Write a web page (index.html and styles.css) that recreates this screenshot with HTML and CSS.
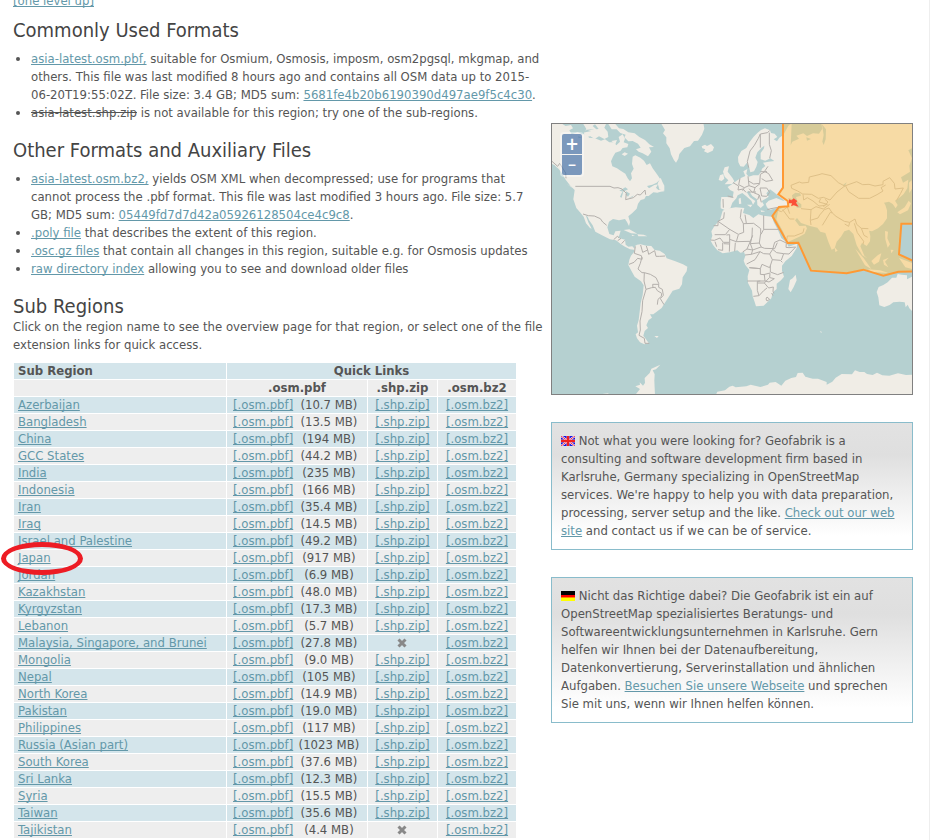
FILE: index.html
```
<!DOCTYPE html>
<html lang="en">
<head>
    <meta charset="UTF-8">
    <meta name="viewport" content="width=device-width, initial-scale=1.0">
    <title>Geofabrik Download Server</title>
    <link rel="stylesheet" href="styles.css">
</head>
<body>

    <div class="page">
        <main class="content">
            <p class="up"><a href="#">[one level up]</a></p>

            <h2>Commonly Used Formats</h2>
            <ul>
                <li><a href="#">asia-latest.osm.pbf,</a> suitable for Osmium, Osmosis, imposm, osm2pgsql, mkgmap, and<br>others. This file was last modified 8 hours ago and contains all OSM data up to 2015-<br>06-20T19:55:02Z. File size: 3.4 GB; MD5 sum: <a href="#">5681fe4b20b6190390d497ae9f5c4c30</a>.</li>
                <li><s>asia-latest.shp.zip</s> is not available for this region; try one of the sub-regions.</li>
            </ul>

            <h2>Other Formats and Auxiliary Files</h2>
            <ul>
                <li><a href="#">asia-latest.osm.bz2,</a> yields OSM XML when decompressed; use for programs that<br>cannot process the .pbf format. This file was last modified 3 hours ago. File size: 5.7<br>GB; MD5 sum: <a href="#">05449fd7d7d42a05926128504ce4c9c8</a>.</li>
                <li><a href="#">.poly file</a> that describes the extent of this region.</li>
                <li><a href="#">.osc.gz files</a> that contain all changes in this region, suitable e.g. for Osmosis updates</li>
                <li><a href="#">raw directory index</a> allowing you to see and download older files</li>
            </ul>

            <h2 class="tight">Sub Regions</h2>
            <p>Click on the region name to see the overview page for that region, or select one of the file<br>extension links for quick access.</p>

            <table class="regions">
                <colgroup>
                    <col class="name-col">
                    <col class="pbf-col">
                    <col class="shp-col">
                    <col class="bz2-col">
                </colgroup>
                <thead>
                    <tr><th class="name">Sub Region</th><th colspan="3">Quick Links</th></tr>
                    <tr><th></th><th>.osm.pbf</th><th>.shp.zip</th><th>.osm.bz2</th></tr>
                </thead>
                <tbody id="rows"></tbody>
            </table>
        </main>

        <aside class="sidebar">
            <div class="map">
                <svg viewBox="0 0 1080 810" role="img" aria-label="Map of Asia">
                    <!-- North America -->
                    <g transform="translate(-21 -27)">
                        <path class="land" d="M15 20L52 27 62 33 78 30 84 40 73 46 80 58 98 52 112 58 126 57 132 68 150 70 168 77 180 73 193 82 207 82 214 91 225 80 221 66 233 58 240 71 236 82 250 87 247 97 233 99 226 108 211 113 204 125 198 139 202 154 216 160 227 167 241 176 248 190 255 199 261 190 258 175 266 161 261 147 263 125 271 121 286 128 297 137 305 150 315 145 323 160 337 179 346 193 335 203 322 209 306 213 312 220 328 210 339 208 333 218 340 225 352 222 358 229 347 230 337 233 325 232 311 243 303 243 298 252 287 255 279 266 275 281 262 294 250 304 255 321 252 333 246 321 240 312 222 316 204 312 192 320 187 337 193 357 206 361 211 349 227 347 223 361 219 368 232 372 240 374 242 389 250 395 262 394 272 405 255 403 240 395 227 387 213 376 195 373 174 362 151 350 143 331 132 315 128 305 122 300 130 322 140 341 135 339 123 325 116 305 105 292 94 279 85 253 89 225 76 212 61 193 52 177 42 163 28 150 15 145Z"/>
                        <path class="land" d="M115 27L183 27 178 38 188 50 190 66 178 72 162 64 149 72 136 64 123 66 116 53 124 42ZM190 27L211 27 222 40 235 42 250 52 269 55 283 66 300 75 313 88 327 96 312 97 319 110 309 124 293 115 281 110 273 103 287 98 279 86 263 78 250 79 238 67 242 59 226 54 215 43 200 43ZM347 23L360 45 354 55 364 67 364 85 374 100 378 118 387 136 393 143 400 131 403 117 418 99 435 94 447 78 459 77 471 59 478 41 475 23Z"/>
                        <path class="land" d="M470 94L480 89 486 93 498 87 507 97 503 107 488 114 477 109 481 103 472 100ZM338 205L347 188 352 200 358 212 358 227 343 223ZM236 345L253 343 277 356 258 355ZM277 358L296 359 307 364 280 364ZM260 359L270 361 261 363ZM65 206L86 220 78 216ZM199 78L216 75 211 88ZM239 112L249 116 239 123 230 118Z"/>
                        <path class="lake" d="M223 227L241 217 249 223 235 230ZM230 234L235 229 230 248 225 246ZM243 229L255 236 249 245 242 239ZM241 253L261 247 268 241 250 250ZM119 45L148 42 128 47ZM99 64L111 67 101 70ZM105 45L139 48 114 53ZM150 28L161 42 154 43 143 33Z"/>
                        <path class="border" d="M20 138L38 154 44 145 62 174 63 190M91 214L195 214 207 219 219 218 231 222 244 235 242 254 265 248 277 238 286 240 300 225 302 239M114 297L130 302 148 303 166 311 173 321 185 331M206 374L217 364 222 368M218 377L228 370M230 386L239 376"/>
                    </g>
                    <!-- South America, Antarctic peninsula -->
                    <g transform="translate(-21 393)">
                        <path class="land" d="M270 -27L276 -31 287 -32 304 -28 319 -27 329 -15 344 -13 359 -3 365 10 389 18 414 28 427 35 425 49 413 67 411 88 403 101 383 107 373 123 357 148 350 159 335 170 325 178 315 178 321 188 311 195 304 211 309 219 299 228 295 242 303 253 311 264 298 268 285 262 276 250 272 238 279 232 276 212 281 195 284 170 287 145 293 120 296 91 288 79 269 65 259 47 250 30 253 14 258 2 267 -9Z"/>
                        <path class="land" d="M269 422L285 402 271 394 285 389 284 382 294 392 300 384 299 369 314 354 319 341 346 329 333 343 323 346 329 358 328 377 330 422ZM328 243L341 243 336 249ZM418 261L425 265ZM172 417L190 415 190 419Z"/>
                        <path class="border" d="M252 28L267 22 278 10 291 13M271 -26L268 -5 289 2 292 13M287 -30L293 -8 308 -15 311 -2 329 -13M308 -15L304 -27M329 -13L333 4 344 4 360 3M291 6L286 25 279 42 291 53 298 53 297 78 303 103 320 98 331 97 337 107 350 115 349 124 339 133 337 149M298 53L316 58 333 68 341 85 341 97M324 98L323 88 340 88M341 97L352 103 355 121 346 131 357 149M303 103L293 137 291 170 285 198 286 225 282 241 298 250 300 265 313 265"/>
                    </g>
                    <!-- Europe and Asia -->
                    <g transform="translate(549 -27)">
                        <path class="land" d="M145 60L133 68 126 79 116 73 127 66 119 56 108 54 105 46 90 40 78 45 67 54 56 65 44 81 34 99 19 108 9 126 10 142 16 154 26 155 36 143 42 156 46 172 57 169 64 155 68 141 61 128 67 112 80 98 88 92 87 100 77 114 77 133 91 137 106 130 118 138 101 140 84 143 91 153 81 161 78 171 70 181 55 181 41 185 34 176 37 162 25 169 31 183 16 190 5 197 -9 208 -22 216 -15 225 -4 230 -7 248 -24 246 -41 246 -43 262 -43 280 -29 286 -14 280 -8 263 4 250 8 241 22 234 34 244 49 257 54 269 61 258 45 247 35 231 42 228 52 243 66 253 67 270 77 279 87 270 80 258 92 251 101 245 94 235 105 223 117 232 128 241 148 256 160 250 170 25 160 32Z"/>
                        <path class="land" d="M92 266L101 257 124 249 144 257 163 256 170 275 135 278 122 280 105 285 96 277ZM-31 157L-18 154 -22 170 -8 188 -2 199 -9 207 -31 208 -20 196 -31 185 -36 170ZM-45 181L-35 177 -32 191 -40 198 -49 195ZM36 269L52 269 47 277ZM11 251L17 248 19 266 12 267ZM77 286L91 289 79 291Z"/>
                        <path class="land" d="M140 84L167 91 172 80 192 71 184 62 205 55 216 63 234 55 252 56 262 41 258 20 545 20 545 91 520 106 531 130 523 152 525 170 513 178 498 187 504 203 520 194 517 220 506 237 496 246 480 257 488 270 482 280 473 267 462 260 447 263 451 270 456 286 456 310 444 327 429 340 411 349 402 347 406 363 405 379 395 393 381 384 376 394 388 422 397 430 382 421 365 391 355 357 342 344 328 349 318 365 305 380 299 400 290 404 280 380 271 354 256 350 247 338 225 333 198 324 186 309 180 316 193 333 212 332 216 340 209 356 193 365 157 382 145 351 124 313 130 285 151 274 147 248 130 239 144 220Z"/>
                        <path class="land" d="M522 203L530 196 532 220 523 234ZM487 292L509 277 521 257 528 265 519 286 495 298ZM450 348L459 350 457 370 465 388 458 398 451 373ZM467 404L476 405 469 415ZM361 402L385 428 409 462 390 451ZM409 438L429 420 439 415 432 440 417 449ZM399 463L435 466 461 474 411 471ZM444 435L461 428 450 440 460 457 447 449ZM492 429L540 447 540 464 511 457ZM299 397L308 407 301 411Z"/>
                        <path class="lake" d="M171 241L181 233 195 235 198 242 183 246 188 260 199 268 199 278 186 278 175 263ZM261 28L273 43 272 73 266 90 262 80 266 60ZM214 67L228 72 216 77ZM324 210L335 202 328 217Z"/>
                        <path class="border" d="M41 158L37 140 45 108 58 91 70 70 76 57 97 53 104 47M76 57L76 98M103 53L103 88 109 107 104 130M-6 203L11 213 9 225 24 222 33 232M15 190L11 209 28 218 42 212 39 184M39 197L56 207 74 205 76 178 90 170 101 176 113 196 93 199 80 191M28 218L23 227M42 212L60 218 75 206M60 218L56 233 73 240 68 254M53 233L42 221M75 219L80 243 95 244 104 232 95 219 75 219M73 240L79 262M88 170L99 154M76 170L96 170M-22 243L-5 247M-36 252L-35 278M40 231L63 231M97 284L108 281 134 276 159 274"/>
                        <path class="border asia" d="M170 220L168 211 193 201 201 204 221 202 223 186 252 179 261 176 288 182 310 203 329 213 365 200 383 209 402 208 420 213 444 209 444 199 464 188 478 205 480 222 505 219 497 235 485 256M170 220L188 228 203 237 230 238 250 250 265 247 285 255 306 231 329 213M332 213L341 230 371 250 404 250 426 239 444 228 438 218 452 210M204 238L206 255 217 248 234 258 252 273 264 272 277 268 252 261 257 251M198 281L228 284 243 275 265 282 284 268M228 284L226 316 228 330M226 316L249 309 254 300 268 284 282 279 292 294 286 292 262 331M292 294L303 304 328 319 344 322 341 334 329 327M344 322L360 312 365 328 379 340 400 341M358 325L367 353 386 379 384 388M379 340L387 361 398 367M143 284L164 312 178 312M126 285L139 290 157 276 164 296M155 377L157 363 178 363 204 353 207 340M160 251L177 255M270 253L279 261 265 276"/>
                    </g>
                    <!-- Africa -->
                    <g transform="translate(414 168)">
                        <path class="land" d="M98 92L110 86 137 82 163 84 159 99 178 105 190 114 205 103 220 107 246 110 251 126 264 150 274 174 289 187 296 200 321 191 320 204 305 228 286 244 276 257 276 272 282 290 273 301 260 311 260 327 249 336 244 355 221 377 198 379 194 366 188 349 186 332 174 309 173 289 178 270 166 255 161 242 166 227 162 216 151 218 142 211 119 217 98 220 82 211 69 195 62 182 67 167 64 154 74 137 90 119ZM317 284L320 301 311 321 302 337 295 327 300 300 308 295Z"/>
                        <path class="border" d="M103 97L101 115 84 124M84 124L84 137 71 137M84 124L119 148 106 164 74 164M119 148L145 163 161 157 160 131 151 113 154 88M160 131L191 130 212 146 212 160 208 189 181 191 186 169 187 143M169 130L165 104M221 106L221 148 269 148M221 148L213 163M109 165L119 164 119 187 100 187 90 174 73 181 62 180M119 178L139 185 145 164M119 187L118 215M136 188L134 214M139 185L181 184 188 166M181 184L171 207 158 216M181 191L188 210 213 201 224 205 254 206 262 188M208 189L214 201M171 207L188 210 184 223 165 225M184 223L210 215 221 221 239 222 247 239 239 263 216 253 211 266 178 263M210 215L195 239 170 252M239 222L248 208 254 187 270 180 289 189 288 202 297 203 317 201 297 222 281 221 260 218 248 208M247 239L271 241 277 247M281 221L274 240M241 257L241 276 263 284 281 277M178 263L211 266 211 283 223 284 225 303 172 303M211 303L202 304 202 331 207 347 190 349M203 309L223 309 239 292 240 280M223 309L236 324 250 321 249 334 252 340M207 347L221 332 231 324M225 303L237 306 253 296 240 293M221 284L240 279M98 188L98 211 84 209M75 185L80 200M101 191L118 192M231 351L239 358 231 363 228 357ZM245 339L249 347"/>
                    </g>
                    <!-- Australia, Antarctica -->
                    <path class="land" transform="translate(549 393)" d="M545 77L532 65 516 73 516 61 500 59 488 57 484 68 471 68 458 82 445 90 431 96 425 111 430 127 433 151 448 156 464 150 475 142 494 140 509 142 512 157 518 149 523 160 532 169 545 170ZM-60 425L-53 410 -30 406 -17 395 -7 392 2 397 34 394 47 389 76 396 99 389 104 383 122 381 139 392 151 377 169 369 183 366 188 354 203 353 211 365 233 371 249 371 275 381 275 389 292 380 302 368 320 357 351 358 360 346 374 351 388 351 396 357 413 360 426 353 442 361 463 362 489 355 513 360 540 359 540 425ZM254 229L260 230 259 234Z"/>
                    <!-- Extent of the extract -->
                    <g transform="translate(549 -27)">
                        <path class="extent" fill-rule="evenodd" d="M144 10V218L130 238 158 258 160 274 132 276 112 303 158 384 190 383 228 467 335 475 385 464 445 482 490 470 545 469V443L492 418 499 326H545V10Z"/>
                        <path class="hot" d="M162 253L170 256 176 250 187 258 183 263 191 275 176 271 168 274 171 265 161 265Z"/>
                    </g>
                </svg>
                <div class="zoom">
                    <button type="button" aria-label="Zoom in">+</button>
                    <button type="button" aria-label="Zoom out">−</button>
                </div>
            </div>

            <div class="note">
                <svg class="flag" viewBox="0 0 14 10" aria-hidden="true">
                    <rect width="14" height="10" fill="#1414e0"/>
                    <path d="M0 0L14 10M14 0L0 10" stroke="#fff" stroke-width="2"/>
                    <path d="M0 0L14 10M14 0L0 10" stroke="#f03050" stroke-width="1"/>
                    <path d="M7 0V10M0 5H14" stroke="#f99" stroke-width="3"/>
                    <path d="M7 0V10M0 5H14" stroke="#f02020" stroke-width="2"/>
                </svg>
                Not what you were looking for? Geofabrik is a<br>consulting and software development firm based in<br>Karlsruhe, Germany specializing in OpenStreetMap<br>services. We're happy to help you with data preparation,<br>processing, server setup and the like. <a href="#">Check out our web<br>site</a> and contact us if we can be of service.
            </div>

            <div class="note">
                <svg class="flag" viewBox="0 0 14 10" aria-hidden="true">
                    <rect width="14" height="4" fill="#000"/>
                    <rect y="4" width="14" height="3" fill="#f00"/>
                    <rect y="6" width="14" height="1" fill="#f80"/>
                    <rect y="7" width="14" height="3" fill="#ff0"/>
                </svg>
                Nicht das Richtige dabei? Die Geofabrik ist ein auf<br>OpenStreetMap spezialisiertes Beratungs- und<br>Softwareentwicklungsunternehmen in Karlsruhe. Gern<br>helfen wir Ihnen bei der Datenaufbereitung,<br>Datenkonvertierung, Serverinstallation und ähnlichen<br>Aufgaben. <a href="#">Besuchen Sie unsere Webseite</a> und sprechen<br>Sie mit uns, wenn wir Ihnen helfen können.
            </div>
        </aside>
    </div>

    <script src="regions.js"></script>
</body>
</html>
```

FILE: styles.css
```
* {
    box-sizing: border-box;
}

body {
    margin: 0;
    background-color: #fff;
    color: #555;
    font-family: "DejaVu Sans Condensed", "Noto Sans", sans-serif;
    font-size: 13px;
    line-height: 18px;
}

.page {
    display: grid;
    grid-template-columns: 528fr 362fr;
    gap: 10px;
    margin-top: -8px;
    padding: 0 16px 0 13px;
    border-right: 1px solid #eee;
    height: calc(100vh + 8px);
    overflow: hidden;
}

.content {
    min-width: 0;
    white-space: nowrap;
}

h2 {
    margin: 8px 0;
    color: #444;
    font-size: 20px;
    font-weight: normal;
    line-height: 24px;
}

h2.tight {
    margin-bottom: 0;
}

p {
    margin: 0;
}

ul {
    margin: 0 0 16px;
    padding-left: 18px;
}

a {
    color: #6398a9;
    text-decoration: underline;
    text-decoration-skip-ink: none;
}

/* Region table */
.regions {
    width: 504px;
    margin-top: 8px;
    border-spacing: 1px;
    table-layout: fixed;
    line-height: 16px;
}

.name-col {
    width: 212px;
}

.shp-col {
    width: 69px;
}

.bz2-col {
    width: 78px;
}

.regions th,
.regions td {
    height: 16px;
    padding: 0;
    text-align: center;
}

.regions .name {
    padding-left: 4px;
    text-align: left;
}

.regions tr {
    background-color: #eee;
}

.regions tr:nth-child(odd) {
    background-color: #d4e5eb;
}

.size {
    display: inline-block;
    width: 64px;
}

.none {
    display: block;
    width: 10px;
    height: 10px;
    margin: 0 auto;
}

.marked {
    position: relative;
}

.ring {
    position: absolute;
    left: -13px;
    top: -8px;
    width: 82px;
    height: 33px;
    border: 5px solid #ed1c24;
    border-radius: 50%;
    pointer-events: none;
}

/* Right column */
.sidebar {
    display: flex;
    flex-direction: column;
    gap: 27px;
    min-width: 0;
    padding-top: 131px;
    white-space: nowrap;
}

.map {
    position: relative;
    border: 1px solid #808080;
    background-color: #b5d0d0;
}

.map svg {
    display: block;
    width: 100%;
}

.land {
    fill: #f0ede6;
}

.lake {
    fill: #b5d0d0;
}

.border {
    fill: none;
    stroke: #b4b0ac;
    stroke-width: 3;
}

.asia {
    stroke: #c4bcb0;
}

.extent {
    fill: #ffc556;
    fill-opacity: 0.45;
    stroke: #ff9933;
    stroke-width: 6;
}

.hot {
    fill: #fb5038;
}

.zoom {
    position: absolute;
    left: 8px;
    top: 8px;
    display: grid;
    gap: 1px;
    padding: 2px;
    border-radius: 4px;
    background-color: rgba(255, 255, 255, 0.4);
}

.zoom button {
    width: 20px;
    height: 20px;
    padding: 0;
    border: none;
    border-radius: 2px 2px 0 0;
    background-color: rgba(0, 60, 136, 0.5);
    color: #fff;
    font: bold 18px/18px "DejaVu Sans Condensed", sans-serif;
}

.zoom button:last-child {
    border-radius: 0 0 2px 2px;
    font-size: 12px;
}

.note {
    padding: 9px;
    border: 1px solid #89bccb;
    background-image: linear-gradient(#e2e2e2, #dfdfdf 25%, #fff 90%);
}

.flag {
    width: 14px;
    height: 10px;
    vertical-align: -1px;
}
```

FILE: regions.js
```
const regions = [
    ['Azerbaijan', '10.7 MB'],
    ['Bangladesh', '13.5 MB'],
    ['China', '194 MB'],
    ['GCC States', '44.2 MB'],
    ['India', '235 MB'],
    ['Indonesia', '166 MB'],
    ['Iran', '35.4 MB'],
    ['Iraq', '14.5 MB'],
    ['Israel and Palestine', '49.2 MB'],
    ['Japan', '917 MB'],
    ['Jordan', '6.9 MB'],
    ['Kazakhstan', '48.0 MB'],
    ['Kyrgyzstan', '17.3 MB'],
    ['Lebanon', '5.7 MB'],
    ['Malaysia, Singapore, and Brunei', '27.8 MB'],
    ['Mongolia', '9.0 MB'],
    ['Nepal', '105 MB'],
    ['North Korea', '14.9 MB'],
    ['Pakistan', '19.0 MB'],
    ['Philippines', '117 MB'],
    ['Russia (Asian part)', '1023 MB'],
    ['South Korea', '37.6 MB'],
    ['Sri Lanka', '12.3 MB'],
    ['Syria', '15.5 MB'],
    ['Taiwan', '35.6 MB'],
    ['Tajikistan', '4.4 MB']
];

// Regions that have no shapefile
const noShape = ['Malaysia, Singapore, and Brunei', 'Tajikistan'];

const cross = '<svg class="none" viewBox="0 0 10 10" role="img" aria-label="not available"><path d="M1.5 1.5L8.5 8.5M8.5 1.5L1.5 8.5" stroke="#888" stroke-width="3"/></svg>';

document.getElementById('rows').innerHTML = regions.map(([name, size]) => `
    <tr>
        <td class="name${name === 'Japan' ? ' marked' : ''}"><a href="#">${name}</a>${name === 'Japan' ? '<span class="ring"></span>' : ''}</td>
        <td><a href="#">[.osm.pbf]</a> <span class="size">(${size})</span></td>
        <td>${noShape.includes(name) ? cross : '<a href="#">[.shp.zip]</a>'}</td>
        <td><a href="#">[.osm.bz2]</a></td>
    </tr>`).join('');
```
